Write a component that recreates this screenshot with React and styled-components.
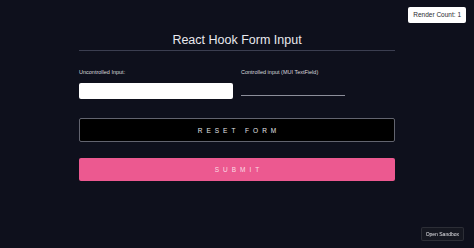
import React from 'react';
import styled, { createGlobalStyle } from 'styled-components';

const GlobalStyle = createGlobalStyle`
  html, body {
    margin: 0;
    padding: 0;
    background-color: #0e101c;
    font-family: 'Liberation Sans', Arial, sans-serif;
  }
  * {
    box-sizing: border-box;
  }
`;

const Page = styled.div`
  min-height: 100vh;
  padding-top: 32px;
`;

const Form = styled.form`
  width: 316px;
  margin: 0 auto;
  display: flex;
  flex-direction: column;
`;

const Title = styled.h1`
  margin: 0;
  padding-bottom: 2px;
  font-size: 12.5px;
  line-height: 16px;
  font-weight: 400;
  color: #e9e9ee;
  text-align: center;
  border-bottom: 1px solid #3b3e50;
`;

const Fields = styled.div`
  display: grid;
  grid-template-columns: 1fr 1fr;
  column-gap: 8px;
  margin-top: 18px;
`;

const Field = styled.div`
  display: flex;
  flex-direction: column;
  align-items: flex-start;
`;

const Label = styled.label`
  font-size: 5.5px;
  line-height: 7px;
  color: #d8d9de;
  margin-bottom: 7px;
`;

const TextInput = styled.input`
  width: 100%;
  height: 16px;
  border: none;
  border-radius: 2px;
  background: #fff;
  padding: 0 4px;
  outline: none;
`;

const MuiField = styled.input`
  width: 104px;
  height: 13px;
  border: none;
  border-bottom: 1px solid #8c8e9a;
  background: transparent;
  padding: 0;
  outline: none;
  color: #fff;
`;

const Button = styled.button`
  width: 100%;
  height: ${({ $height }) => $height}px;
  margin-top: ${({ $gap }) => $gap}px;
  border-radius: 2px;
  font-family: 'Liberation Sans', Arial, sans-serif;
  font-size: 6.5px;
  font-weight: 100;
  letter-spacing: 4px;
  text-indent: 4px;
  text-transform: uppercase;
  cursor: pointer;
  background: ${({ $variant }) => ($variant === 'reset' ? '#000' : '#ec5990')};
  color: ${({ $variant }) => ($variant === 'reset' ? '#e4e4e8' : 'rgba(255, 255, 255, 0.78)')};
  border: ${({ $variant }) => ($variant === 'reset' ? '1px solid #62646f' : 'none')};
`;

const RenderCount = styled.div`
  position: fixed;
  top: 7px;
  right: 8px;
  height: 16px;
  padding: 0 5px;
  line-height: 16px;
  font-size: 6.5px;
  color: #2a2a2e;
  background: #fff;
  border-radius: 2px;
`;

const SandboxLink = styled.a`
  position: fixed;
  right: 10px;
  bottom: 7px;
  height: 14px;
  padding: 0 4px;
  line-height: 12px;
  font-size: 5px;
  color: #e2e2e6;
  background: #151720;
  border: 1px solid rgba(255, 255, 255, 0.1);
  border-radius: 2px;
  text-decoration: none;
`;

export default function App() {
  return (
    <>
      <GlobalStyle />
      <Page>
        <RenderCount>Render Count: 1</RenderCount>
        <Form onSubmit={(e) => e.preventDefault()}>
          <Title>React Hook Form Input</Title>
          <Fields>
            <Field>
              <Label>Uncontrolled Input:</Label>
              <TextInput name="uncontrolled" />
            </Field>
            <Field>
              <Label>Controlled input (MUI TextField)</Label>
              <MuiField name="controlled" />
            </Field>
          </Fields>
          <Button type="button" $variant="reset" $height={24} $gap={19}>
            Reset Form
          </Button>
          <Button type="submit" $variant="submit" $height={23} $gap={16}>
            Submit
          </Button>
        </Form>
        <SandboxLink href="#">Open Sandbox</SandboxLink>
      </Page>
    </>
  );
}
